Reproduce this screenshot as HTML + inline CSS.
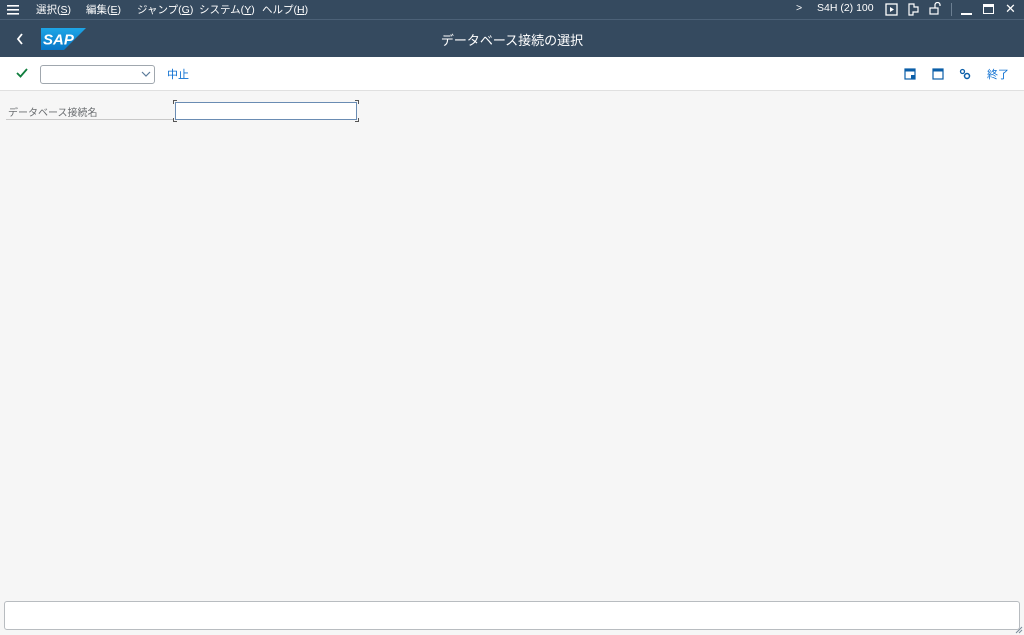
<!DOCTYPE html>
<html><head><meta charset="utf-8"><style>
*{margin:0;padding:0;box-sizing:border-box}
body{width:1024px;height:635px;background:#f6f6f6;font-family:"Liberation Sans","Noto Sans CJK JP",sans-serif;position:relative;overflow:hidden}
.menu{position:absolute;left:0;top:0;width:1024px;height:20px;background:#354a5f;color:#fff;font-size:10.5px;border-bottom:1px solid #4c6177}
.menu span{position:absolute;top:2px;white-space:nowrap}
.title{position:absolute;left:0;top:20px;width:1024px;height:37px;background:#354a5f;color:#fff}
.tb{position:absolute;left:0;top:57px;width:1024px;height:34px;background:#fff;border-bottom:1px solid #e0e0e0}
u{text-decoration:underline}
</style></head><body>
<div class="menu">
<svg style="position:absolute;left:7px;top:5px" width="12" height="10"><rect y="0" width="12" height="1.6" fill="#fff"/><rect y="4" width="12" height="1.6" fill="#fff"/><rect y="8" width="12" height="1.6" fill="#fff"/></svg>
<span style="left:36px">選択(<u>S</u>)</span>
<span style="left:86px">編集(<u>E</u>)</span>
<span style="left:137px">ジャンプ(<u>G</u>)</span>
<span style="left:199px">システム(<u>Y</u>)</span>
<span style="left:262px">ヘルプ(<u>H</u>)</span>
<span style="left:796px">&gt;</span>
<span style="left:817px">S4H (2) 100</span>
<svg style="position:absolute;left:885px;top:3px" width="13" height="13"><rect x="1" y="1" width="11" height="11" fill="none" stroke="#fff" stroke-width="1.3"/><path d="M5 4 L9 6.5 L5 9Z" fill="#fff"/></svg>
<svg style="position:absolute;left:907px;top:3px" width="13" height="13"><path d="M2 12V1H7V4H11V9H6V12Z" fill="none" stroke="#fff" stroke-width="1.2"/></svg>
<svg style="position:absolute;left:929px;top:2px" width="13" height="13"><rect x="1" y="6" width="8" height="6" fill="none" stroke="#fff" stroke-width="1.2"/><path d="M6 6V3a2.5 2.5 0 0 1 5 0V4" fill="none" stroke="#fff" stroke-width="1.2"/></svg>
<div style="position:absolute;left:951px;top:3px;width:1px;height:13px;background:#6c7f92"></div>
<div style="position:absolute;left:961px;top:13px;width:11px;height:2px;background:#fff"></div>
<div style="position:absolute;left:983px;top:4px;width:11px;height:10px;border:1.5px solid #fff;border-top-width:3px"></div>
<span style="left:1005px;top:1px;font-size:13px">✕</span>
</div>
<div class="title">
<svg style="position:absolute;left:15px;top:12px" width="10" height="14"><path d="M7 2 L3 7 L7 12" fill="none" stroke="#fff" stroke-width="1.8"/></svg>
<svg style="position:absolute;left:41px;top:8px" width="46" height="22"><defs><linearGradient id="g" x1="0" y1="0" x2="0" y2="1"><stop offset="0" stop-color="#1ea5e6"/><stop offset="1" stop-color="#0877c7"/></linearGradient></defs><path d="M0 0H45L23 22H0Z" fill="url(#g)"/><text x="2" y="16.5" font-family="Liberation Sans" font-weight="bold" font-size="15" fill="#fff" font-style="italic">SAP</text></svg>
<div style="position:absolute;left:0;width:1024px;top:10px;text-align:center;font-size:13px">データベース接続の選択</div>
</div>
<div class="tb">
<svg style="position:absolute;left:16px;top:11px" width="12" height="10"><path d="M1 5 L4.5 8.5 L11 1" fill="none" stroke="#107e3e" stroke-width="1.8"/></svg>
<div style="position:absolute;left:40px;top:8px;width:115px;height:19px;border:1px solid #a0a7ae;border-radius:3px;background:#fff"></div>
<svg style="position:absolute;left:141px;top:14px" width="10" height="7"><path d="M1 1 L5 5 L9 1" fill="none" stroke="#5a7a9a" stroke-width="1.2"/></svg>
<span style="position:absolute;left:167px;top:9px;font-size:11px;color:#0a6ed1">中止</span>
<svg style="position:absolute;left:904px;top:11px" width="12" height="12"><rect x="1" y="1" width="10" height="10" fill="none" stroke="#0a5ea8" stroke-width="1.2"/><rect x="1" y="1" width="10" height="2.5" fill="#0a5ea8"/><rect x="7" y="7" width="4" height="4" fill="#0a5ea8"/></svg>
<svg style="position:absolute;left:932px;top:11px" width="12" height="12"><rect x="1" y="1" width="10" height="10" fill="none" stroke="#0a5ea8" stroke-width="1.2"/><rect x="1" y="1" width="10" height="2.5" fill="#0a5ea8"/></svg>
<svg style="position:absolute;left:959px;top:11px" width="12" height="12"><circle cx="3.5" cy="3.5" r="2" fill="none" stroke="#0a5ea8" stroke-width="1.3"/><circle cx="8" cy="8" r="2.5" fill="none" stroke="#0a5ea8" stroke-width="1.5"/></svg>
<span style="position:absolute;left:987px;top:9px;font-size:11px;color:#0a6ed1">終了</span>
</div>
<span style="position:absolute;left:8px;top:104px;font-size:10px;color:#6a6d70">データベース接続名</span>
<div style="position:absolute;left:6px;top:119px;width:168px;height:1px;background:#c8c8c8"></div>
<div style="position:absolute;left:175px;top:102px;width:182px;height:18px;border:1px solid #6a8cb3;background:#fff"></div>
<div style="position:absolute;left:173px;top:100px;width:4px;height:4px;border-left:1px solid #555;border-top:1px solid #555"></div>
<div style="position:absolute;left:173px;top:118px;width:4px;height:4px;border-left:1px solid #555;border-bottom:1px solid #555"></div>
<div style="position:absolute;left:355px;top:100px;width:4px;height:4px;border-right:1px solid #555;border-top:1px solid #555"></div>
<div style="position:absolute;left:355px;top:118px;width:4px;height:4px;border-right:1px solid #555;border-bottom:1px solid #555"></div>
<div style="position:absolute;left:4px;top:601px;width:1016px;height:29px;border:1px solid #b8bcc0;border-radius:3px;background:#fff"></div>
<svg style="position:absolute;left:1014px;top:625px" width="9" height="9"><path d="M8 2 L2 8 M8 5 L5 8" stroke="#7a8a9a" stroke-width="1"/></svg>
</body></html>
